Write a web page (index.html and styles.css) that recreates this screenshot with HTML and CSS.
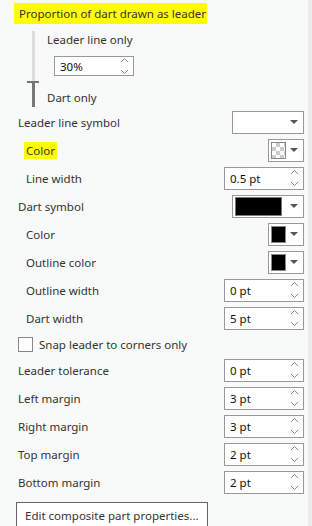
FILE: index.html
```html
<!DOCTYPE html>
<html lang="en">
<head>
    <meta charset="UTF-8">
    <meta name="viewport" content="width=device-width, initial-scale=1.0">
    <title>Leader properties</title>
    <link rel="stylesheet" href="styles.css">
</head>
<body>
    <div class="pane">
        <div class="title"><span class="hl">Proportion of dart drawn as leader</span></div>

        <div class="slider-block">
            <div class="slider">
                <div class="track"></div>
                <div class="thumb"></div>
                <div class="stem"></div>
            </div>
            <div class="slider-body">
                <div class="slider-label top">Leader line only</div>
                <div class="spin pct">
                    <span class="val">30%</span>
                    <svg class="arrows" width="9" height="18" viewBox="0 0 9 18"><polyline points="1,5 4.5,1.5 8,5"/><polyline points="1,13 4.5,16.5 8,13"/></svg>
                </div>
                <div class="slider-label bottom">Dart only</div>
            </div>
        </div>

        <div class="row">
            <span class="lbl">Leader line symbol</span>
            <div class="drop wide"><span class="fill"></span><span class="caret"></span></div>
        </div>
        <div class="row sub">
            <span class="lbl"><span class="hl small">Color</span></span>
            <div class="drop swatch"><span class="chip checker"></span><span class="caret"></span></div>
        </div>
        <div class="row sub">
            <span class="lbl">Line width</span>
            <div class="spin">
                <span class="val">0.5 pt</span>
                <svg class="arrows" width="9" height="18" viewBox="0 0 9 18"><polyline points="1,5 4.5,1.5 8,5"/><polyline points="1,13 4.5,16.5 8,13"/></svg>
            </div>
        </div>
        <div class="row">
            <span class="lbl">Dart symbol</span>
            <div class="drop wide"><span class="fill black"></span><span class="caret"></span></div>
        </div>
        <div class="row sub">
            <span class="lbl">Color</span>
            <div class="drop swatch"><span class="chip black"></span><span class="caret"></span></div>
        </div>
        <div class="row sub">
            <span class="lbl">Outline color</span>
            <div class="drop swatch"><span class="chip black"></span><span class="caret"></span></div>
        </div>
        <div class="row sub">
            <span class="lbl">Outline width</span>
            <div class="spin">
                <span class="val">0 pt</span>
                <svg class="arrows" width="9" height="18" viewBox="0 0 9 18"><polyline points="1,5 4.5,1.5 8,5"/><polyline points="1,13 4.5,16.5 8,13"/></svg>
            </div>
        </div>
        <div class="row sub">
            <span class="lbl">Dart width</span>
            <div class="spin">
                <span class="val">5 pt</span>
                <svg class="arrows" width="9" height="18" viewBox="0 0 9 18"><polyline points="1,5 4.5,1.5 8,5"/><polyline points="1,13 4.5,16.5 8,13"/></svg>
            </div>
        </div>

        <label class="check-row">
            <span class="box"></span>
            <span>Snap leader to corners only</span>
        </label>

        <div class="row">
            <span class="lbl">Leader tolerance</span>
            <div class="spin">
                <span class="val">0 pt</span>
                <svg class="arrows" width="9" height="18" viewBox="0 0 9 18"><polyline points="1,5 4.5,1.5 8,5"/><polyline points="1,13 4.5,16.5 8,13"/></svg>
            </div>
        </div>
        <div class="row">
            <span class="lbl">Left margin</span>
            <div class="spin">
                <span class="val">3 pt</span>
                <svg class="arrows" width="9" height="18" viewBox="0 0 9 18"><polyline points="1,5 4.5,1.5 8,5"/><polyline points="1,13 4.5,16.5 8,13"/></svg>
            </div>
        </div>
        <div class="row">
            <span class="lbl">Right margin</span>
            <div class="spin">
                <span class="val">3 pt</span>
                <svg class="arrows" width="9" height="18" viewBox="0 0 9 18"><polyline points="1,5 4.5,1.5 8,5"/><polyline points="1,13 4.5,16.5 8,13"/></svg>
            </div>
        </div>
        <div class="row">
            <span class="lbl">Top margin</span>
            <div class="spin">
                <span class="val">2 pt</span>
                <svg class="arrows" width="9" height="18" viewBox="0 0 9 18"><polyline points="1,5 4.5,1.5 8,5"/><polyline points="1,13 4.5,16.5 8,13"/></svg>
            </div>
        </div>
        <div class="row">
            <span class="lbl">Bottom margin</span>
            <div class="spin">
                <span class="val">2 pt</span>
                <svg class="arrows" width="9" height="18" viewBox="0 0 9 18"><polyline points="1,5 4.5,1.5 8,5"/><polyline points="1,13 4.5,16.5 8,13"/></svg>
            </div>
        </div>

        <button class="edit-btn">Edit composite part properties...</button>
    </div>
    <div class="scroll-strip"></div>
</body>
</html>
```

FILE: styles.css
```css
html, body {
    height: 100%;
}
body {
    margin: 0;
    display: flex;
    background: #f8f9f9;
    font-family: "Segoe UI", "Noto Sans", sans-serif;
    font-size: 11.5px;
    color: #333;
    overflow: hidden;
}
.pane {
    flex: 1;
    padding: 3px 4px 0 18px;
}
.scroll-strip {
    width: 4px;
    background: #ebebeb;
}
.hl {
    background: #ffff00;
}
.title {
    height: 21px;
    display: flex;
    align-items: center;
}
.title .hl {
    margin-left: -4px;
    padding: 0 1px 0 5px;
    line-height: 21px;
}
.hl.small {
    margin-left: -2px;
    padding: 0 2px;
    line-height: 17px;
    display: inline-block;
}

/* slider */
.slider-block {
    display: flex;
    height: 84px;
}
.slider {
    position: relative;
    width: 29px;
}
.track {
    position: absolute;
    left: 14px;
    top: 7px;
    width: 3px;
    height: 50px;
    background: #dcdcdc;
}
.thumb {
    position: absolute;
    left: 9px;
    top: 57px;
    width: 12px;
    height: 2px;
    background: #777;
}
.stem {
    position: absolute;
    left: 14px;
    top: 59px;
    width: 3px;
    height: 24px;
    background: #777;
}
.slider-body {
    display: flex;
    flex-direction: column;
}
.slider-label.top {
    height: 33px;
    line-height: 32px;
}
.slider-label.bottom {
    margin-top: 10px;
    line-height: 24px;
}
.spin.pct {
    width: 80px;
    margin-left: 7px;
}

/* rows */
.row {
    height: 28px;
    display: flex;
    align-items: center;
    justify-content: space-between;
}
.row.sub .lbl {
    padding-left: 8px;
}
.spin, .drop {
    box-sizing: border-box;
    height: 23px;
    border: 1px solid #999;
    background: #fff;
    display: flex;
    align-items: center;
}
.spin {
    width: 80px;
    padding: 0 4px 0 5px;
    justify-content: space-between;
    color: #111;
}
.arrows polyline {
    fill: none;
    stroke: #888;
    stroke-width: 1;
}
.drop {
    padding: 0 5px 0 2px;
}
.drop.wide {
    width: 72px;
}
.drop.swatch {
    width: 36px;
}
.fill {
    flex: 1;
    height: 17px;
    margin-right: 8px;
}
.fill.black {
    background: #000;
    border: 1px solid #777;
}
.chip {
    width: 17px;
    height: 17px;
    box-sizing: border-box;
    border: 1px solid #888;
}
.chip.black {
    background: #000;
}
.chip.checker {
    background-color: #fff;
    background-image: conic-gradient(#ccc 25%, #fff 0 50%, #ccc 0 75%, #fff 0);
    background-size: 8px 8px;
}
.caret {
    margin-left: auto;
    width: 0;
    height: 0;
    border-left: 4px solid transparent;
    border-right: 4px solid transparent;
    border-top: 4px solid #555;
}
.drop.swatch .caret {
    margin-left: 4px;
}

/* checkbox */
.check-row {
    height: 24px;
    display: flex;
    align-items: center;
    gap: 6px;
}
.box {
    width: 13px;
    height: 13px;
    border: 1px solid #888;
    background: #fff;
}

.edit-btn {
    margin-top: 6px;
    margin-left: -2px;
    height: 26px;
    padding: 0 8px;
    border: 1px solid #666;
    background: #fff;
    font-family: inherit;
    font-size: 11.5px;
    color: #333;
}
```
